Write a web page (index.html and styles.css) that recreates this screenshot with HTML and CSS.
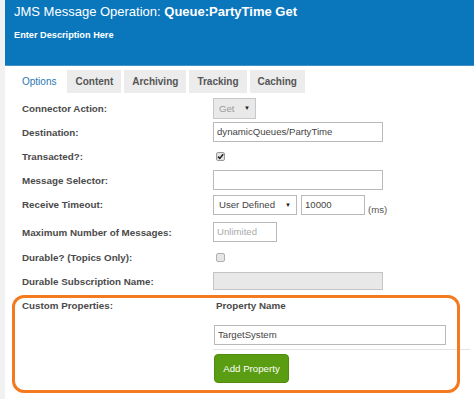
FILE: index.html
```html
<!DOCTYPE html>
<html lang="en">
<head>
  <meta charset="UTF-8">
  <title>JMS Message Operation</title>
  <link rel="stylesheet" href="styles.css">
</head>
<body>
<div class="page">

  <header class="op-header">
    <h1 class="op-title">JMS Message Operation: <b>Queue:PartyTime Get</b></h1>
    <p class="op-desc">Enter Description Here</p>
  </header>

  <ul class="tabs">
    <li class="tab active">Options</li>
    <li class="tab">Content</li>
    <li class="tab">Archiving</li>
    <li class="tab">Tracking</li>
    <li class="tab">Caching</li>
  </ul>

  <div class="form">
    <div class="row">
      <label class="lbl">Connector Action:</label>
      <div class="field">
        <span class="select select-disabled select-small">Get <span class="caret">&#9660;</span></span>
      </div>
    </div>

    <div class="row">
      <label class="lbl">Destination:</label>
      <div class="field"><span class="input input-wide">dynamicQueues/PartyTime</span></div>
    </div>

    <div class="row">
      <label class="lbl">Transacted?:</label>
      <div class="field">
        <svg class="check" width="9" height="9" viewBox="0 0 9 9">
          <rect x="0.5" y="0.5" width="8" height="8" rx="1.5" fill="#e4e4e4" stroke="#9a9a9a"/>
          <path d="M2 4.6 L3.8 6.4 L7.2 2.2" fill="none" stroke="#222" stroke-width="1.5"/>
        </svg>
      </div>
    </div>

    <div class="row">
      <label class="lbl">Message Selector:</label>
      <div class="field"><span class="input input-wide"></span></div>
    </div>

    <div class="row row-timeout">
      <label class="lbl">Receive Timeout:</label>
      <div class="field">
        <span class="select select-mid">User Defined <span class="caret">&#9660;</span></span>
        <span class="input input-short">10000</span>
        <span class="unit">(ms)</span>
      </div>
    </div>

    <div class="row row-max">
      <label class="lbl">Maximum Number of Messages:</label>
      <div class="field"><span class="input input-short placeholder">Unlimited</span></div>
    </div>

    <div class="row row-durable">
      <label class="lbl">Durable? (Topics Only):</label>
      <div class="field">
        <svg class="check" width="9" height="9" viewBox="0 0 9 9">
          <rect x="0.5" y="0.5" width="8" height="8" rx="1.5" fill="#e6e6e6" stroke="#b0b0b0"/>
        </svg>
      </div>
    </div>

    <div class="row row-sub">
      <label class="lbl">Durable Subscription Name:</label>
      <div class="field"><span class="input input-wide input-disabled"></span></div>
    </div>

    <div class="custom">
      <div class="lbl custom-lbl">Custom Properties:</div>
      <div class="custom-body">
        <div class="prop-head">Property Name</div>
        <div class="prop-row"><span class="input input-prop">TargetSystem</span></div>
        <div class="prop-actions"><button class="btn-add">Add Property</button></div>
      </div>
      <!-- annotation frame drawn over the section -->
      <div class="highlight"></div>
    </div>
  </div>

</div>
</body>
</html>
```

FILE: styles.css
```css
body {
  margin: 0;
  background-color: #f1f1f1;
  font-family: "Liberation Sans", Arial, sans-serif;
  color: #4a4a4a;
}

.page {
  margin-left: 5px;
  min-height: 100vh;
  background-color: #fff;
  overflow: hidden;
}

/* header */
.op-header {
  height: 66px;
  box-sizing: border-box;
  padding: 4px 9px 0;
  background-color: #0a77bd;
  border-bottom: 1px solid #3f93c9;
  color: #fff;
}

.op-title {
  margin: 0;
  font-size: 13px;
  line-height: 16px;
  font-weight: normal;
}

.op-desc {
  margin: 9px 0 0;
  font-size: 9.2px;
  line-height: 12px;
  font-weight: bold;
}

/* tabs */
.tabs {
  display: flex;
  gap: 3px;
  list-style: none;
  margin: 4px 0 0 9px;
  padding: 0;
}

.tab {
  height: 23px;
  line-height: 23px;
  padding: 0 8px;
  font-size: 10px;
  font-weight: bold;
  color: #555;
  background-color: #ececec;
}

.tab.active {
  background-color: transparent;
  font-weight: normal;
  color: #2a78b4;
}

/* form */
.form {
  padding: 3px 4px 0 17px;
}

.row {
  display: grid;
  grid-template-columns: 191px 1fr;
  align-items: center;
  height: 24px;
}

.row-timeout { height: 25px; }
.row-max { height: 30px; }
.row-durable { height: 20px; }
.row-sub { height: 28px; }

.lbl {
  font-size: 9.8px;
  font-weight: bold;
  color: #4a4a4a;
}

.field {
  display: flex;
  align-items: center;
  gap: 4px;
}

.input {
  display: inline-block;
  box-sizing: border-box;
  height: 20px;
  line-height: 18px;
  padding: 0 3px;
  border: 1px solid #b9b9b9;
  background-color: #fff;
  font-size: 9.6px;
  color: #444;
}

.input-wide { width: 170px; }
.input-short { width: 64px; }
.input-disabled { background-color: #e8e8e8; border-color: #c4c4c4; height: 18px; }
.placeholder { color: #aaa; }

.select {
  display: inline-flex;
  align-items: center;
  justify-content: space-between;
  box-sizing: border-box;
  height: 20px;
  padding: 0 5px;
  border: 1px solid #b9b9b9;
  background-color: #fff;
  font-size: 9.6px;
  color: #444;
}

.select-small { width: 43px; height: 21px; }
.select-mid { width: 84px; }

.select-disabled {
  background-color: #e9e9e9;
  border-color: #c8c8c8;
  color: #999;
}

.caret {
  font-size: 6px;
  color: #222;
}

.check {
  display: block;
  margin-left: 3px;
}

.unit {
  align-self: flex-end;
  margin-left: -1px;
  font-size: 9.6px;
  color: #555;
}

/* custom properties */
.custom {
  position: relative;
  display: grid;
  grid-template-columns: 191px 1fr;
  padding-top: 5px;
  height: 93px;
}

.custom-lbl {
  line-height: 12px;
}

.prop-head {
  padding-left: 3px;
  font-size: 9.8px;
  font-weight: bold;
  line-height: 12px;
  color: #4a4a4a;
}

.prop-row {
  margin-top: 12px;
  padding: 0 0 4px 1px;
  border-bottom: 1px solid #e4e4e4;
}

.input-prop { width: 232px; }

.prop-actions {
  padding: 4px 0 0 1px;
}

.btn-add {
  width: 75px;
  height: 29px;
  padding: 0;
  border: 1px solid #4f8c0c;
  border-radius: 4px;
  background-color: #5a9d12;
  font-family: "Liberation Sans", Arial, sans-serif;
  font-size: 9.7px;
  color: #fff;
}

.highlight {
  position: absolute;
  left: -10px;
  top: 0;
  width: 448px;
  height: 98px;
  box-sizing: border-box;
  border: 3px solid #f47a20;
  border-radius: 12px;
  pointer-events: none;
}
```
